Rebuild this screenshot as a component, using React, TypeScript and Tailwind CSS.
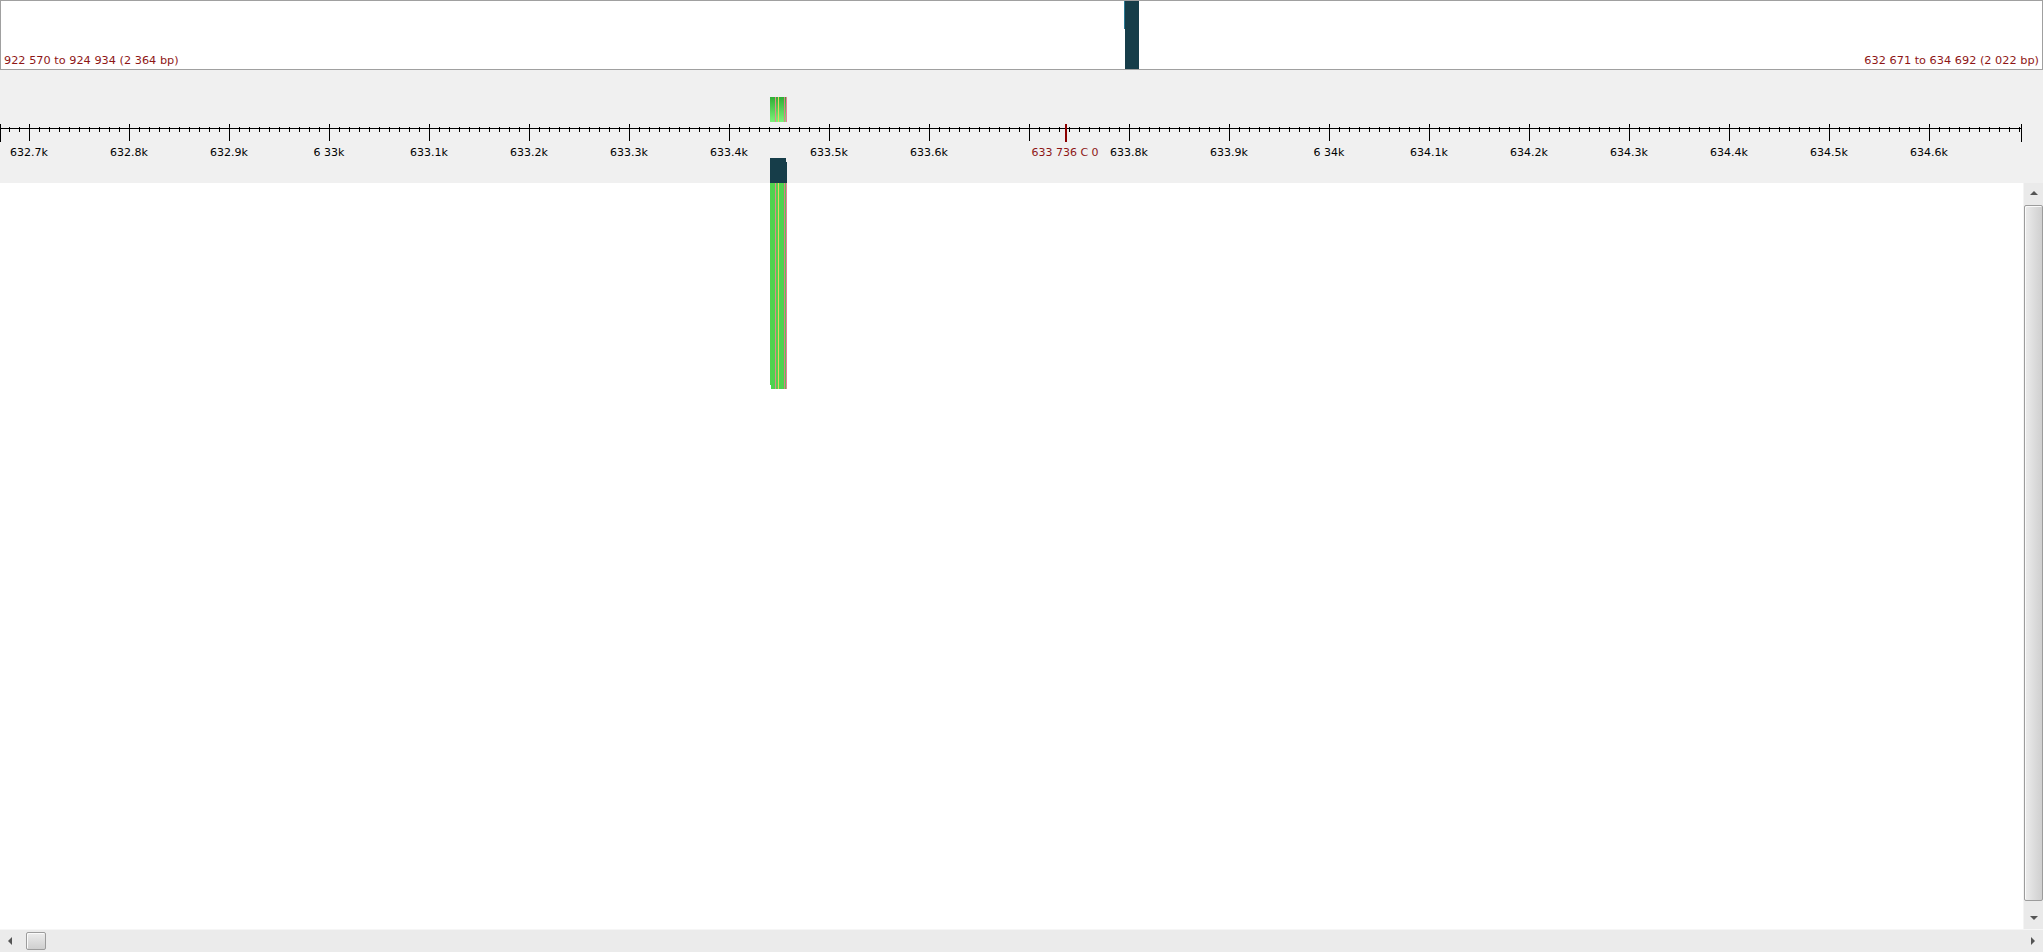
import React from "react";

const MAJORS = [
  "632.7k", "632.8k", "632.9k", "6 33k", "633.1k", "633.2k", "633.3k", "633.4k", "633.5k", "633.6k",
  "", "633.8k", "633.9k", "6 34k", "634.1k", "634.2k", "634.3k", "634.4k", "634.5k", "634.6k",
];

function Stripes({ x, y, h, gradId }: { x: number; y: number; h: number; gradId: string }) {
  return (
    <g shapeRendering="crispEdges">
      <rect x={x} y={y} width={17} height={h} fill={`url(#${gradId})`} />
      <rect x={x + 5} y={y} width={1.4} height={h} fill="#e08a8a" />
      <rect x={x + 7.7} y={y} width={1.3} height={h} fill="#e8d060" />
      <rect x={x + 13.7} y={y} width={1} height={h} fill="#e07a8a" />
      <rect x={x + 15.7} y={y} width={1.3} height={h} fill="#e87a9a" />
    </g>
  );
}

function Ruler() {
  const minor: number[] = [];
  for (let x = 9; x < 2021; x += 10) minor.push(x);
  return (
    <svg width={2043} height={113} className="block" style={{ fontFamily: "'DejaVu Sans', sans-serif" }}>
      <defs>
        <linearGradient id="gTop" x1="0" y1="0" x2="0" y2="1">
          <stop offset="0" stopColor="#2fae36" />
          <stop offset="1" stopColor="#7cf27a" />
        </linearGradient>
      </defs>
      <g shapeRendering="crispEdges" stroke="#000" strokeWidth={1}>
        <line x1={0} y1={58.5} x2={2022} y2={58.5} />
        <line x1={0.5} y1={54} x2={0.5} y2={72} />
        <line x1={2021.5} y1={54} x2={2021.5} y2={72} />
        {minor.map((x) =>
          (x - 29) % 100 === 0 ? (
            <line key={x} x1={x + 0.5} y1={54} x2={x + 0.5} y2={71} />
          ) : (
            <line key={x} x1={x + 0.5} y1={57} x2={x + 0.5} y2={62} />
          )
        )}
      </g>
      <rect x={1065} y={54} width={2} height={18} fill="#8b0000" shapeRendering="crispEdges" />
      {MAJORS.map((t, i) =>
        t ? (
          <text key={i} x={29 + i * 100} y={85.5} textAnchor="middle" fontSize={11} fill="#000">
            {t}
          </text>
        ) : null
      )}
      <text x={1065} y={85.5} textAnchor="middle" fontSize={11} fill="#8e1616">
        633 736 C 0
      </text>
      <Stripes x={770} y={27} h={25} gradId="gTop" />
      <rect x={770} y={88} width={16} height={25} fill="#163d49" shapeRendering="crispEdges" />
      <rect x={786} y={92} width={1} height={21} fill="#163d49" shapeRendering="crispEdges" />
    </svg>
  );
}

function Track() {
  return (
    <svg width={2023} height={746} className="block">
      <defs>
        <linearGradient id="gTrack" x1="0" y1="0" x2="0" y2="1">
          <stop offset="0" stopColor="#4fd24f" />
          <stop offset="1" stopColor="#4fd24f" />
        </linearGradient>
      </defs>
      <Stripes x={770} y={0} h={206} gradId="gTrack" />
      <rect x={770} y={202} width={1} height={4} fill="#ffffff" shapeRendering="crispEdges" />
    </svg>
  );
}

function Tri({ dir }: { dir: "up" | "down" | "left" | "right" }) {
  const pts = {
    up: "0,4 4,0 8,4",
    down: "0,0 8,0 4,4",
    left: "4,0 4,8 0,4",
    right: "0,0 0,8 4,4",
  }[dir];
  const w = dir === "up" || dir === "down" ? 8 : 4;
  const h = dir === "up" || dir === "down" ? 4 : 8;
  return (
    <svg width={w} height={h} className="block">
      <polygon points={pts} fill="#555" />
    </svg>
  );
}

export default function App() {
  return (
    <div
      className="w-[2043px] h-[952px] flex flex-col bg-[#f0f0f0] overflow-hidden"
      style={{ fontFamily: "'DejaVu Sans', sans-serif" }}
    >
      {/* overview panel */}
      <div className="relative h-[70px] shrink-0 border border-[#a0a0a0] bg-white flex items-end justify-between px-[3px] pb-[2px] text-[11.3px] leading-[13px] text-[#8e1616]">
        <span>922 570 to 924 934 (2 364 bp)</span>
        <span>632 671 to 634 692 (2 022 bp)</span>
        <div className="absolute left-[1124px] top-0 w-[14px] h-[68px] bg-[#163d49]" />
        <div className="absolute left-[1123px] top-0 w-[1px] h-[28px] bg-[#2a7a95]" />
      </div>

      {/* ruler */}
      <div className="h-[113px] shrink-0">
        <Ruler />
      </div>

      {/* track area */}
      <div className="flex flex-1 min-h-0">
        <div className="flex-1 bg-white overflow-hidden">
          <Track />
        </div>
        <div className="w-[20px] flex flex-col bg-[#eaeaea] border-l border-[#f4f4f4]">
          <div className="h-[20px] flex items-center justify-center">
            <Tri dir="up" />
          </div>
          <div className="flex-1 px-[0px] py-[2px]">
            <div className="h-[696px] rounded-[2px] border border-[#9c9c9c] bg-gradient-to-r from-[#ececec] to-[#cfcfcf] shadow-[inset_1px_1px_0_#fafafa]" />
          </div>
          <div className="h-[22px] flex items-center justify-center">
            <Tri dir="down" />
          </div>
        </div>
      </div>

      {/* horizontal scrollbar */}
      <div className="h-[23px] shrink-0 flex items-center bg-[#ebebeb] border-t border-[#f6f6f6]">
        <div className="w-[20px] flex items-center justify-center">
          <Tri dir="left" />
        </div>
        <div className="flex-1 h-full py-[2px] pl-[6px]">
          <div className="w-[20px] h-full rounded-[2px] border border-[#9c9c9c] bg-gradient-to-b from-[#ececec] to-[#cfcfcf] shadow-[inset_1px_1px_0_#fafafa]" />
        </div>
        <div className="w-[20px] flex items-center justify-center">
          <Tri dir="right" />
        </div>
      </div>
    </div>
  );
}
